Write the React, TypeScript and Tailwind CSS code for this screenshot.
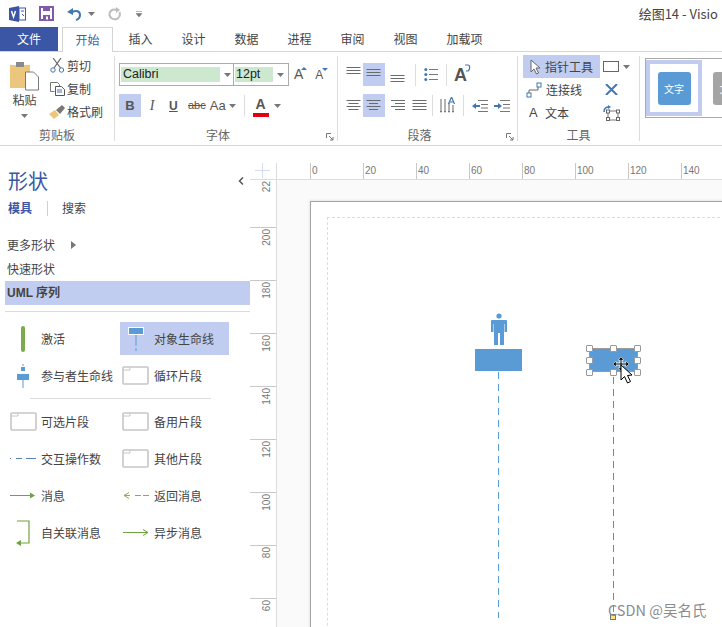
import type { ReactNode } from "react";

const tabs = ["插入", "设计", "数据", "进程", "审阅", "视图", "加载项"];
const hTicks = ["0", "20", "40", "60", "80", "100", "120", "140"];
const vTicks = ["200", "180", "160", "140", "120", "100", "80", "60"];

const Caret = ({ className = "" }: { className?: string }) => (
  <svg width="7" height="4" viewBox="0 0 7 4" className={className}>
    <path d="M0 0h7L3.5 4z" fill="#777" />
  </svg>
);

const Lines = ({ widths, gap = 4 }: { widths: number[]; gap?: number }) => (
  <svg width="16" height="14" viewBox="0 0 16 14">
    {widths.map((w, i) => (
      <path key={i} d={`M${w < 0 ? 15 + w : (15 - w) / 2} ${1.5 + i * gap}h${Math.abs(w)}`} stroke="#6b6b6b" strokeWidth="1" />
    ))}
  </svg>
);

const Sep = ({ className = "h-[22px]" }: { className?: string }) => <div className={`w-px bg-[#dcdcdc] ${className}`} />;

const GroupLabel = ({ children, launcher, shift }: { children: ReactNode; launcher?: boolean; shift?: boolean }) => (
  <div className={`absolute -bottom-[2px] left-0 right-0 h-[16px] text-center text-[12px] leading-[16px] text-[#666] ${shift ? "pr-[16px]" : ""}`}>
    {children}
    {launcher && (
      <svg width="8" height="8" viewBox="0 0 8 8" className="absolute right-[3px] bottom-[2px]">
        <path d="M0.5 5V.5H5M3 3l4 4M7 4v3H4" fill="none" stroke="#777" />
      </svg>
    )}
  </div>
);

const SmallTool = ({ icon, label }: { icon: ReactNode; label: string }) => (
  <div className="flex h-[23px] items-center gap-[1px] text-[12px] text-[#444]">
    <span className="flex w-[18px] justify-center">{icon}</span>
    {label}
  </div>
);

const FragmentIcon = () => (
  <svg width="27" height="19" viewBox="0 0 27 19">
    <rect x="1" y="1" width="25" height="17" rx="1" fill="#fff" stroke="#c6c6c6" strokeWidth="1.6" />
    <path d="M1 4h7V1" fill="none" stroke="#c6c6c6" />
  </svg>
);

const shapes: { icon: ReactNode; label: string; active?: boolean }[][] = [
  [
    { icon: <div className="h-[26px] w-[4px] rounded-sm bg-[#7cab4e]" />, label: "激活" },
    {
      icon: (
        <svg width="16" height="24" viewBox="0 0 16 24">
          <rect x="0.5" y="0.5" width="15" height="7" fill="#5b9bd5" stroke="#fff" />
          <path d="M8 8v11M8 21v3" stroke="#5b9bd5" />
        </svg>
      ),
      label: "对象生命线",
      active: true,
    },
  ],
  [
    {
      icon: (
        <svg width="14" height="24" viewBox="0 0 14 24">
          <path d="M7 0v2" stroke="#5b9bd5" />
          <rect x="5" y="3" width="4" height="4" fill="#5b9bd5" />
          <rect x="1" y="10" width="12" height="6" fill="#5b9bd5" />
          <path d="M7 16v8" stroke="#5b9bd5" />
        </svg>
      ),
      label: "参与者生命线",
    },
    { icon: <FragmentIcon />, label: "循环片段" },
  ],
  [
    { icon: <FragmentIcon />, label: "可选片段" },
    { icon: <FragmentIcon />, label: "备用片段" },
  ],
  [
    {
      icon: (
        <svg width="27" height="3" viewBox="0 0 27 3">
          <path d="M0 1.5h1M6 1.5h6M16 1.5h10" stroke="#5b7fb5" />
        </svg>
      ),
      label: "交互操作数",
    },
    { icon: <FragmentIcon />, label: "其他片段" },
  ],
  [
    {
      icon: (
        <svg width="26" height="7" viewBox="0 0 26 7">
          <path d="M0 3.5h21" stroke="#70a33f" />
          <path d="M20 0.5l5 3-5 3z" fill="#70a33f" />
        </svg>
      ),
      label: "消息",
    },
    {
      icon: (
        <svg width="26" height="7" viewBox="0 0 26 7">
          <path d="M6 .5l-5 3 5 3M1 3.5h6M12 3.5h6M20 3.5h6" fill="none" stroke="#84b05a" />
        </svg>
      ),
      label: "返回消息",
    },
  ],
  [
    {
      icon: (
        <svg width="16" height="26" viewBox="0 0 16 26">
          <path d="M2 1h12v22H5" fill="none" stroke="#70a33f" strokeWidth="1.2" />
          <path d="M6 20l-5 3 5 3z" fill="#70a33f" />
        </svg>
      ),
      label: "自关联消息",
    },
    {
      icon: (
        <svg width="26" height="7" viewBox="0 0 26 7">
          <path d="M0 3.5h25M20 .5l5 3-5 3" fill="none" stroke="#70a33f" />
        </svg>
      ),
      label: "异步消息",
    },
  ],
];

const ShapeRow = ({ row }: { row: (typeof shapes)[number] }) => (
  <div className="grid grid-cols-[115px_109px]">
    <div className="flex h-[33px] items-center text-[12px] text-[#444]">
      <span className="flex w-[36px] shrink-0 justify-center">{row[0].icon}</span>
      <span className="whitespace-nowrap">{row[0].label}</span>
    </div>
    <div className={`flex h-[33px] items-center text-[12px] text-[#444] ${row[1].active ? "bg-[#c0cdf0]" : ""}`}>
      <span className="flex w-[34px] shrink-0 justify-center pr-[3px]">{row[1].icon}</span>
      <span className="whitespace-nowrap">{row[1].label}</span>
    </div>
  </div>
);

const Handle = ({ className }: { className: string }) => (
  <span className={`absolute h-[7px] w-[7px] rounded-[1px] border border-[#999] bg-white ${className}`} />
);

const Lifeline = ({ className, height, color }: { className: string; height: number; color: string }) => (
  <svg width="3" height={height} viewBox={`0 0 3 ${height}`} className={className}>
    <path d={`M1.500 0v${height}`} stroke={color} strokeWidth="1" strokeDasharray="7 5" />
  </svg>
);

export default function App() {
  return (
    <div className="relative flex h-[627px] w-[722px] flex-col overflow-hidden bg-white font-['Noto_Sans_CJK_SC','Liberation_Sans',sans-serif]">
      {/* title bar */}
      <div className="flex h-[27px] shrink-0 items-center pl-[9px] pr-[4px]">
        <svg width="17" height="16" viewBox="0 0 17 16">
          <path d="M0 2l10-2v16L0 14z" fill="#3a56a4" />
          <rect x="10" y="2" width="6.5" height="12" fill="#fff" stroke="#3a56a4" />
          <path d="M2.5 5l2 6 2-6" fill="none" stroke="#fff" strokeWidth="1.5" />
          <path d="M12 5h3M13 8l2 2" stroke="#3a56a4" />
        </svg>
        <svg width="15" height="15" viewBox="0 0 15 15" className="ml-[13px]">
          <path d="M1 1h13v13H1z" fill="none" stroke="#8458a8" strokeWidth="2" />
          <rect x="4" y="1" width="7" height="4" fill="#8458a8" />
          <rect x="4" y="9" width="7" height="5" fill="#8458a8" />
          <rect x="7" y="10.5" width="2" height="3" fill="#fff" />
        </svg>
        <svg width="15" height="14" viewBox="0 0 15 14" className="ml-[13px]">
          <path d="M4 6c3-3 9-3 9 2 0 2-1 4-4 5" fill="none" stroke="#3f78b5" strokeWidth="2" />
          <path d="M0 5l6-4v7z" fill="#3f78b5" />
        </svg>
        <Caret className="ml-[6px]" />
        <svg width="14" height="14" viewBox="0 0 14 14" className="ml-[13px]">
          <path d="M9 3C4 1 1 5 1.500 8c.5 3 4 5 7 4 3-1 4-4 3-7" fill="none" stroke="#bdbdbd" strokeWidth="2" />
          <path d="M8 0v6l4-3z" fill="#bdbdbd" />
        </svg>
        <svg width="6" height="6" viewBox="0 0 6 6" className="ml-[14px]">
          <path d="M0 .5h6M0 2.500h6L3 6z" fill="#777" stroke="#777" strokeWidth=".5" />
        </svg>
        <span className="ml-auto text-[13px] text-[#444]">绘图14 - Visio</span>
      </div>

      {/* tabs */}
      <div className="flex h-[25px] shrink-0 items-stretch border-b border-[#d4d4d4] text-[12px]">
        <div className="flex w-[58px] items-center justify-center bg-[#3a56a4] text-white">文件</div>
        <div className="relative z-10 ml-[4px] flex h-[25px] w-[51px] items-center justify-center border-x border-t border-[#d4d4d4] bg-white text-[#3a62a8]">开始</div>
        <div className="ml-[1px] flex">
          {tabs.map((t) => (
            <div key={t} className="flex items-center px-[14.5px] text-[#444]">{t}</div>
          ))}
        </div>
      </div>

      {/* ribbon */}
      <div className="flex h-[94px] shrink-0 border-b border-[#d4d4d4] pb-[4px] pt-[4px]">
        {/* clipboard */}
        <div className="relative flex w-[115px] shrink-0 border-r border-[#dcdcdc]">
          <div className="ml-[10px] flex w-[29px] flex-col items-center pt-[4px]">
            <svg width="29" height="31" viewBox="0 0 29 31">
              <path d="M0 5h20v23H0z" fill="#edc67e" />
              <rect x="6" y="2" width="8" height="5" fill="#8a8a8a" />
              <path d="M15.500 12h8l5 5v13h-13z" fill="#fff" stroke="#7a7a7a" />
            </svg>
            <span className="mt-[1px] text-[12px] leading-[16px] text-[#444]">粘贴</span>
            <Caret className="mt-[6px]" />
          </div>
          <div className="-mt-[2px] ml-[9px] flex flex-col">
            <SmallTool
              label="剪切"
              icon={
                <svg width="15" height="15" viewBox="0 0 15 15">
                  <circle cx="3" cy="12" r="2.200" fill="none" stroke="#3f78b5" />
                  <circle cx="11.500" cy="12" r="2.200" fill="none" stroke="#3f78b5" />
                  <path d="M4 10L11 0M10.500 10L3 0" stroke="#666" strokeWidth="1.200" />
                </svg>
              }
            />
            <SmallTool
              label="复制"
              icon={
                <svg width="15" height="14" viewBox="0 0 15 14">
                  <path d="M.5.5h7l2 2v2M.5.5v9h4" fill="none" stroke="#777" />
                  <path d="M5.500 4.500h6l3 3v6h-9z" fill="#fff" stroke="#555" />
                  <path d="M7 8h5M7 10h5" stroke="#3f78b5" />
                </svg>
              }
            />
            <SmallTool
              label="格式刷"
              icon={
                <svg width="16" height="14" viewBox="0 0 16 14">
                  <path d="M0 9l6-4 4 5-5 4z" fill="#edc67e" />
                  <path d="M7 5l6-5 3 3-5 6z" fill="#777" />
                </svg>
              }
            />
          </div>
          <GroupLabel>剪贴板</GroupLabel>
        </div>

        {/* font */}
        <div className="relative w-[223px] shrink-0 border-r border-[#dcdcdc] pl-[4px] pt-[7px]">
          <div className="flex h-[23px] items-center">
            <div className="flex h-[23px] w-[115px] items-center border border-[#ababab] px-[1px]">
              <span className="h-[15px] w-[99px] bg-[#cce8cf] pl-[2px] font-['Liberation_Sans',sans-serif] text-[12.5px] leading-[15px] text-[#222]">Calibri</span>
              <Caret className="ml-[4px]" />
            </div>
            <div className="flex h-[23px] w-[55px] items-center border border-l-0 border-[#ababab] px-[1px]">
              <span className="h-[15px] w-[38px] bg-[#cce8cf] pl-[1px] font-['Liberation_Sans',sans-serif] text-[12.5px] leading-[15px] text-[#222]">12pt</span>
              <Caret className="ml-[4px]" />
            </div>
            <span className="relative ml-[5px] font-['Liberation_Sans',sans-serif] text-[14px] text-[#555]">
              A<span className="absolute -right-[4px] top-[3px] h-0 w-0 border-x-[3px] border-b-[3px] border-x-transparent border-b-[#3f78b5]" />
            </span>
            <span className="relative ml-[12px] font-['Liberation_Sans',sans-serif] text-[12px] text-[#555]">
              A<span className="absolute -right-[5px] top-[2px] h-0 w-0 border-x-[3px] border-t-[3px] border-x-transparent border-t-[#3f78b5]" />
            </span>
          </div>
          <div className="mt-[8px] flex h-[23px] items-center font-['Liberation_Sans',sans-serif] text-[#555]">
            <span className="flex h-[23px] w-[22px] items-center justify-center bg-[#c0cdf0] text-[13px] font-bold">B</span>
            <span className="ml-[7px] w-[8px] text-center font-['Liberation_Serif',serif] text-[14px] italic">I</span>
            <span className="ml-[13px] w-[8px] text-center text-[12px] font-bold underline">U</span>
            <span className="ml-[11px] text-[11px] line-through">abc</span>
            <span className="ml-[4px] text-[13px]">Aa</span>
            <Caret className="ml-[3px]" />
            <Sep className="ml-[8px] h-[21px]" />
            <span className="relative ml-[8px] flex h-[22px] w-[16px] justify-center text-[14px] font-bold leading-[18px]">
              A<span className="absolute bottom-0 left-0 right-0 h-[4px] bg-[#e3000f]" />
            </span>
            <Caret className="ml-[5px]" />
          </div>
          <GroupLabel launcher shift>字体</GroupLabel>
        </div>

        {/* paragraph */}
        <div className="relative w-[180px] shrink-0 border-r border-[#dcdcdc] pl-[7px] pt-[7px]">
          <div className="flex h-[23px] items-center">
            <span className="-mt-[4px] flex w-[18px] justify-center"><Lines widths={[14, 14, 14]} gap={3} /></span>
            <span className="flex h-[23px] w-[22px] items-center justify-center bg-[#c0cdf0]"><Lines widths={[14, 14, 14]} gap={3} /></span>
            <span className="mt-[12px] flex w-[26px] justify-center"><Lines widths={[14, 14, 14]} gap={3} /></span>
            <Sep className="ml-[4px] h-[22px]" />
            <svg width="14" height="16" viewBox="0 0 14 16" className="ml-[8px]">
              <path d="M5 2.500h9M5 7.500h9M5 12.500h9" stroke="#777" />
              <circle cx="1.800" cy="2.500" r="1.500" fill="#3f78b5" />
              <circle cx="1.800" cy="7.500" r="1.500" fill="#3f78b5" />
              <circle cx="1.800" cy="12.500" r="1.500" fill="#3f78b5" />
            </svg>
            <Sep className="ml-[8px] h-[22px]" />
            <span className="relative ml-[7px] font-['Liberation_Sans',sans-serif] text-[18px] font-bold leading-[22px] text-[#555]">
              A
              <svg width="7" height="9" viewBox="0 0 7 9" className="absolute -right-[4px] top-0">
                <path d="M1 1h3c2 0 2.500 4 0 6H2" fill="none" stroke="#3f78b5" strokeWidth="1.200" />
              </svg>
            </span>
          </div>
          <div className="mt-[8px] flex h-[23px] items-center">
            <span className="flex w-[18px] justify-center"><Lines widths={[14, 10, 14, 10]} gap={3} /></span>
            <span className="flex h-[23px] w-[22px] items-center justify-center bg-[#c0cdf0]"><Lines widths={[14, 9, 14, 9]} gap={3} /></span>
            <span className="flex w-[26px] justify-center"><Lines widths={[-14, -10, -14, -10]} gap={3} /></span>
            <span className="flex w-[18px] justify-center"><Lines widths={[14, 14, 14, 14]} gap={3} /></span>
            <Sep className="ml-[3px] h-[21px]" />
            <svg width="16" height="18" viewBox="0 0 16 18" className="ml-[7px]">
              <path d="M1 2v13M5 2v13M9 6v9M13 8v7" stroke="#666" />
              <path d="M0 14h2l-1 2zM4 14h2l-1 2zM8 14h2l-1 2zM12 14h2l-1 2z" fill="#666" />
              <path d="M8.500 7L11.500 0l3 7M10 5h3" fill="none" stroke="#3f78b5" strokeWidth="1.200" />
            </svg>
            <Sep className="ml-[7px] h-[21px]" />
            <svg width="16" height="12" viewBox="0 0 16 12" className="ml-[8px]">
              <path d="M6 .5h10M9 4.500h7M9 8h7M6 11.500h10" stroke="#777" />
              <path d="M0 6l4-3v2h4v2H4v2z" fill="#3f78b5" />
            </svg>
            <svg width="16" height="12" viewBox="0 0 16 12" className="ml-[6px]">
              <path d="M6 .5h10M9 4.500h7M9 8h7M6 11.500h10" stroke="#777" />
              <path d="M8 6L4 3v2H0v2h4v2z" fill="#3f78b5" />
            </svg>
          </div>
          <GroupLabel launcher shift>段落</GroupLabel>
        </div>

        {/* tools */}
        <div className="relative w-[122px] shrink-0 border-r border-[#dcdcdc] pl-[5px]">
          <div className="-mt-[1px] flex h-[23px] items-center">
            <div className="flex h-[23px] w-[77px] items-center bg-[#c0cdf0] text-[12px] text-[#444]">
              <svg width="11" height="16" viewBox="0 0 11 16" className="ml-[7px]">
                <path d="M1 1v12l3-3 2.500 5 2-1-2.500-5h4z" fill="#fff" stroke="#666" />
              </svg>
              <span className="ml-[4px]">指针工具</span>
            </div>
            <span className="ml-[3px] h-[11px] w-[16px] border border-[#666]" />
            <Caret className="ml-[4px]" />
          </div>
          <div className="flex h-[23px] items-center text-[12px] text-[#444]">
            <svg width="16" height="16" viewBox="0 0 16 16" className="ml-[3px]">
              <rect x="11" y="1" width="4" height="4" fill="#fff" stroke="#3f78b5" />
              <rect x="1" y="11" width="4" height="4" fill="#fff" stroke="#3f78b5" />
              <path d="M3 11V8h9V5" fill="none" stroke="#666" />
            </svg>
            <span className="ml-[4px]">连接线</span>
            <svg width="13" height="11" viewBox="0 0 13 11" className="ml-[23px]">
              <path d="M1 0l11 11M12 0L1 11" stroke="#3f78b5" strokeWidth="2" />
            </svg>
          </div>
          <div className="flex h-[23px] items-center text-[12px] text-[#444]">
            <span className="ml-[6px] w-[13px] font-['Liberation_Sans',sans-serif] text-[13px]">A</span>
            <span className="ml-[3px]">文本</span>
            <svg width="17" height="16" viewBox="0 0 17 16" className="ml-[34px]">
              <path d="M5 6h10v9H5z" fill="none" stroke="#777" />
              <rect x="3.500" y="5" width="3" height="3" fill="#fff" stroke="#666" />
              <rect x="13.500" y="5" width="3" height="3" fill="#fff" stroke="#666" />
              <rect x="3.500" y="12.500" width="3" height="3" fill="#fff" stroke="#666" />
              <rect x="13.500" y="12.500" width="3" height="3" fill="#fff" stroke="#666" />
              <path d="M1 7c0-3 2-5 5-5" fill="none" stroke="#3f78b5" strokeWidth="1.500" />
              <path d="M5 0l3 2-3 2z" fill="#3f78b5" />
            </svg>
          </div>
          <GroupLabel>工具</GroupLabel>
        </div>

        {/* quick styles */}
        <div className="flex-1 pl-[5px] pt-[2px]">
          <div className="flex h-[60px] items-center border-y border-l border-[#ababab]">
            <div className="flex h-[56px] w-[56px] items-center justify-center border-[4px] border-[#c0cdf0] bg-white">
              <div className="flex h-[33px] w-[33px] items-center justify-center rounded-[3px] bg-[#5b9bd5] text-[10px] text-white">文字</div>
            </div>
            <div className="ml-[11px] flex h-[33px] w-[33px] shrink-0 items-center justify-center rounded-[3px] bg-[#a5a5a5] text-[10px] text-white">文字</div>
          </div>
        </div>
      </div>

      {/* body */}
      <div className="flex min-h-0 flex-1">
        {/* shapes panel */}
        <aside className="w-[250px] shrink-0">
          <div className="flex items-center justify-between pl-[8px] pr-[6px] pt-[20px]">
            <span className="text-[20px] leading-[30px] text-[#3a56a4]">形状</span>
            <svg width="6" height="8" viewBox="0 0 6 8">
              <path d="M5 .5L1.500 4 5 7.500" fill="none" stroke="#555" strokeWidth="1.500" />
            </svg>
          </div>
          <div className="flex items-center pl-[8px] pt-[3px] text-[12px] leading-[18px]">
            <span className="font-bold text-[#3a56a4]">模具</span>
            <span className="ml-[15px] h-[15px] w-px bg-[#d0d0d0]" />
            <span className="ml-[14px] text-[#444]">搜索</span>
          </div>
          <div className="mt-[16px] flex h-[24px] items-center pl-[7px] text-[12px] text-[#444]">
            更多形状
            <span className="ml-[16px] h-0 w-0 border-y-[4px] border-l-[5px] border-y-transparent border-l-[#777]" />
          </div>
          <div className="flex h-[24px] items-center pl-[7px] text-[12px] text-[#444]">快速形状</div>
          <div className="ml-[5px] flex h-[24px] items-center bg-[#c0cdf0] pl-[2px] text-[12px] font-bold text-[#444]">
            <span className="font-['Liberation_Sans','Noto_Sans_CJK_SC',sans-serif]">UML 序列</span>
          </div>
          <div className="ml-[5px] mt-[6px] h-px bg-[#dcdcdc]" />
          <div className="ml-[5px] mt-[10px] flex flex-col">
            <ShapeRow row={shapes[0]} />
            <div className="mt-[4px]"><ShapeRow row={shapes[1]} /></div>
            <div className="ml-[25px] mt-[6px] h-px w-[181px] bg-[#dcdcdc]" />
            <div className="mt-[6px] flex flex-col gap-[4px]">
              {shapes.slice(2).map((row) => (
                <ShapeRow key={row[0].label} row={row} />
              ))}
            </div>
          </div>
        </aside>

        {/* drawing area */}
        <div className="relative min-w-0 flex-1 overflow-hidden pt-[17px]">
          <div className="flex h-[17px] items-stretch border-b border-[#dcdcdc]">
            <div className="relative w-[27px] shrink-0 border-r border-[#dcdcdc]">
              <span className="absolute left-[12px] top-0 h-[15px] w-px bg-[#d5dcf5]" />
              <span className="absolute left-[5px] top-[7px] h-px w-[15px] bg-[#d5dcf5]" />
            </div>
            <div className="w-[33px] shrink-0" />
            {hTicks.map((t) => (
              <div key={t} className="w-[53px] shrink-0 border-l border-[#c8c8c8] pl-[1px] font-['Liberation_Sans',sans-serif] text-[10px] leading-[15px] text-[#777]">{t}</div>
            ))}
          </div>
          <div className="flex h-full">
            <div className="w-[27px] shrink-0 border-r border-[#dcdcdc]">
              <div className="flex h-[47px] justify-center pl-[7px] pt-[1px]">
                <span className="rotate-180 self-start font-['Liberation_Sans',sans-serif] text-[10px] leading-[12px] text-[#777] [writing-mode:vertical-rl]">22</span>
              </div>
              {vTicks.map((t) => (
                <div key={t} className="flex h-[53px] justify-center border-t border-[#c8c8c8] pl-[7px] pt-[1px]">
                  <span className="rotate-180 self-start font-['Liberation_Sans',sans-serif] text-[10px] leading-[12px] text-[#777] [writing-mode:vertical-rl]">{t}</span>
                </div>
              ))}
            </div>
            <div className="relative flex-1 bg-[#fafafa] pl-[33px] pt-[21px]">
              <div className="h-[600px] w-[600px] border-l border-t border-[#a6a6a6] bg-white pl-[16px] pt-[15px] shadow-[-1px_-1px_2px_rgba(0,0,0,0.08)]">
                <div className="h-full w-full border-l border-t border-dashed border-[#dddddd]" />
              </div>

              {/* first lifeline */}
              <svg width="18" height="33" viewBox="0 0 18 33" className="absolute left-[213px] top-[133px]">
                <circle cx="9" cy="3" r="2.600" fill="#5b9bd5" />
                <path d="M2 7h14a1 1 0 0 1 1 1v11h-2.500V11H14v21h-4V20H8v12H4V11h-.5v8H1V8a1 1 0 0 1 1-1z" fill="#5b9bd5" />
              </svg>
              <div className="absolute left-[198px] top-[169px] h-[22px] w-[47px] bg-[#5b9bd5]" />
              <Lifeline className="absolute left-[220px] top-[192px]" height={246} color="#5b9bd5" />

              {/* selected lifeline */}
              <div className="absolute left-[312px] top-[168px] h-[24px] w-[49px] border border-[#999] bg-[#5b9bd5]" />
              <Handle className="left-[309px] top-[165px]" />
              <Handle className="left-[333px] top-[165px]" />
              <Handle className="left-[357px] top-[165px]" />
              <Handle className="left-[309px] top-[177px]" />
              <Handle className="left-[357px] top-[177px]" />
              <Handle className="left-[309px] top-[189px]" />
              <Handle className="left-[333px] top-[189px]" />
              <Handle className="left-[357px] top-[189px]" />
              <Lifeline className="absolute left-[335px] top-[197px]" height={237} color="#5b8fc0" />
              <span className="absolute left-[333px] top-[434px] h-[6px] w-[6px] border border-[#777] bg-[#ffe27a]" />

              {/* move cursor */}
              <svg width="22" height="30" viewBox="0 0 22 30" className="absolute left-[335px] top-[176px]">
                <path d="M2 8h14M9 2v12" stroke="#fff" strokeWidth="3" />
                <path d="M9 1l3 3H6zM9 15l-3-3h6zM1 8l3-3v6zM17 8l-3 3V5z" fill="#000" stroke="#fff" strokeWidth=".5" />
                <path d="M2 8h14M9 2v12" stroke="#000" />
                <path d="M9 9v15l3.500-3.500 3 6.500 3-1.500-3-6 4.500-.5z" fill="#fff" stroke="#000" />
              </svg>
            </div>
          </div>
        </div>
      </div>

      {/* CSDN watermark */}
      <span className="absolute left-[608px] top-[600px] text-[14.5px] leading-[20px] text-[#8c8c8c]">CSDN @吴名氏</span>
    </div>
  );
}
